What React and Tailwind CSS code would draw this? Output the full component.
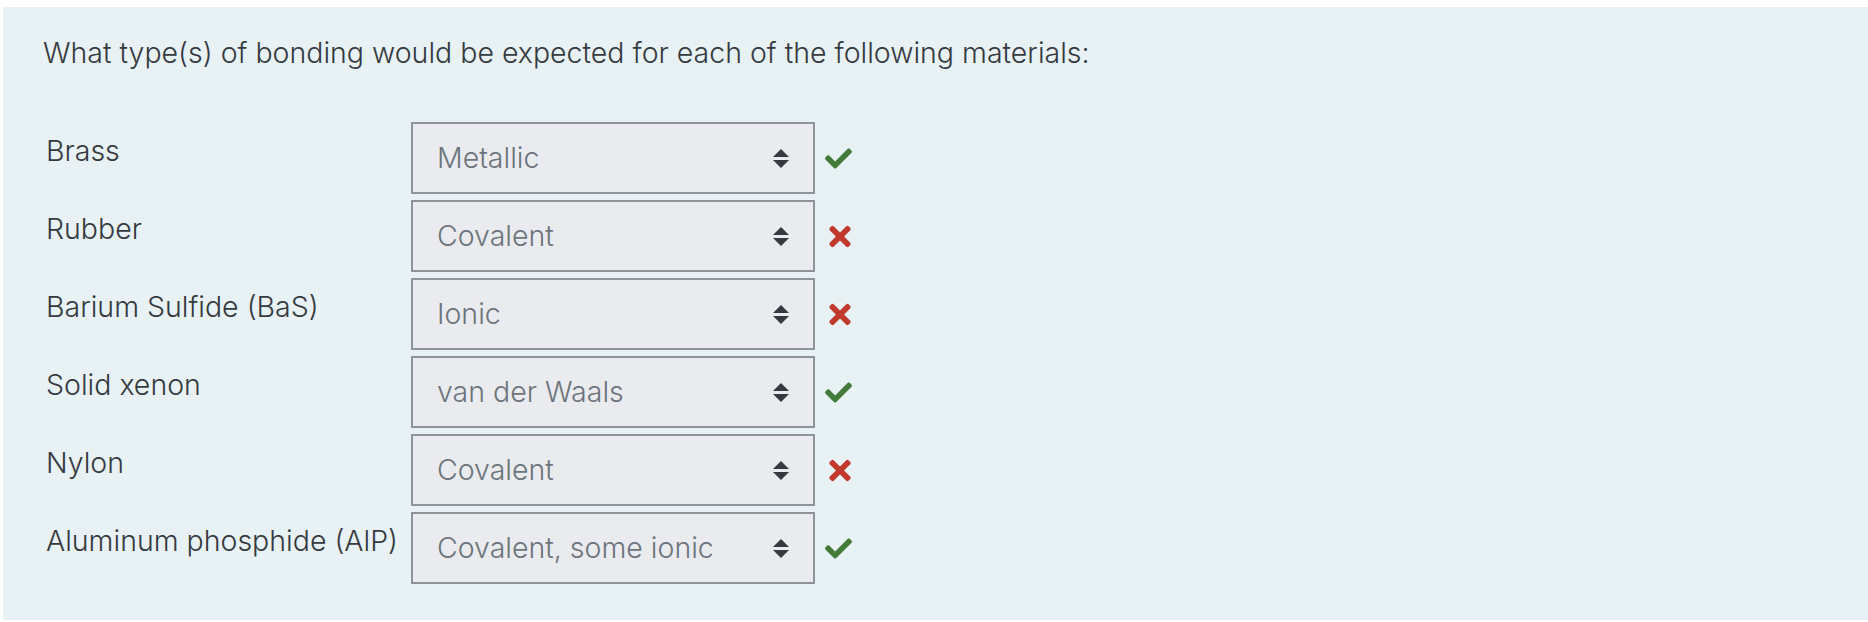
import { FaCheck, FaTimes } from "react-icons/fa";

const rows = [
  { label: "Brass", value: "Metallic", ok: true },
  { label: "Rubber", value: "Covalent", ok: false },
  { label: "Barium Sulfide (BaS)", value: "Ionic", ok: false },
  { label: "Solid xenon", value: "van der Waals", ok: true },
  { label: "Nylon", value: "Covalent", ok: false },
  { label: "Aluminum phosphide (AlP)", value: "Covalent, some ionic", ok: true },
];

const Caret = () => (
  <svg width="16" height="19" viewBox="0 0 16 19" className="shrink-0">
    <path d="M0 8 L8 0 L16 8 Z" fill="#343a40" />
    <path d="M0 11 L16 11 L8 19 Z" fill="#343a40" />
  </svg>
);

export default function App() {
  return (
    <div className="w-[1868px] h-[622px] bg-white pt-[7px] pl-[3px] font-['Inter',sans-serif] font-light">
      <div className="h-[613px] bg-[#e8f1f4] pl-[40px] pt-[29px] text-[28.5px] leading-[1.2] text-[#343a3f]">
        {/* Question */}
        <p>What type(s) of bonding would be expected for each of the following materials:</p>

        {/* Answers */}
        <div className="mt-[52px] flex flex-col gap-[6px]">
          {rows.map((row, i) => (
            <div key={i} className="flex items-start">
              <div className="w-[368px] pt-[12px] pl-[3px] whitespace-nowrap">{row.label}</div>
              <div className="w-[404px] h-[72px] border-2 border-[#8d949b] bg-[#e9ebef] flex items-center justify-between pl-[24px] pr-[24px]">
                <span className="text-[#6c747c]">{row.value}</span>
                <Caret />
              </div>
              <div className="w-[40px] h-[72px] flex items-center pl-[10px]">
                {row.ok ? (
                  <FaCheck size={27} className="text-[#437b39]" />
                ) : (
                  <FaTimes size={31} className="text-[#c0392b]" />
                )}
              </div>
            </div>
          ))}
        </div>
      </div>
    </div>
  );
}
